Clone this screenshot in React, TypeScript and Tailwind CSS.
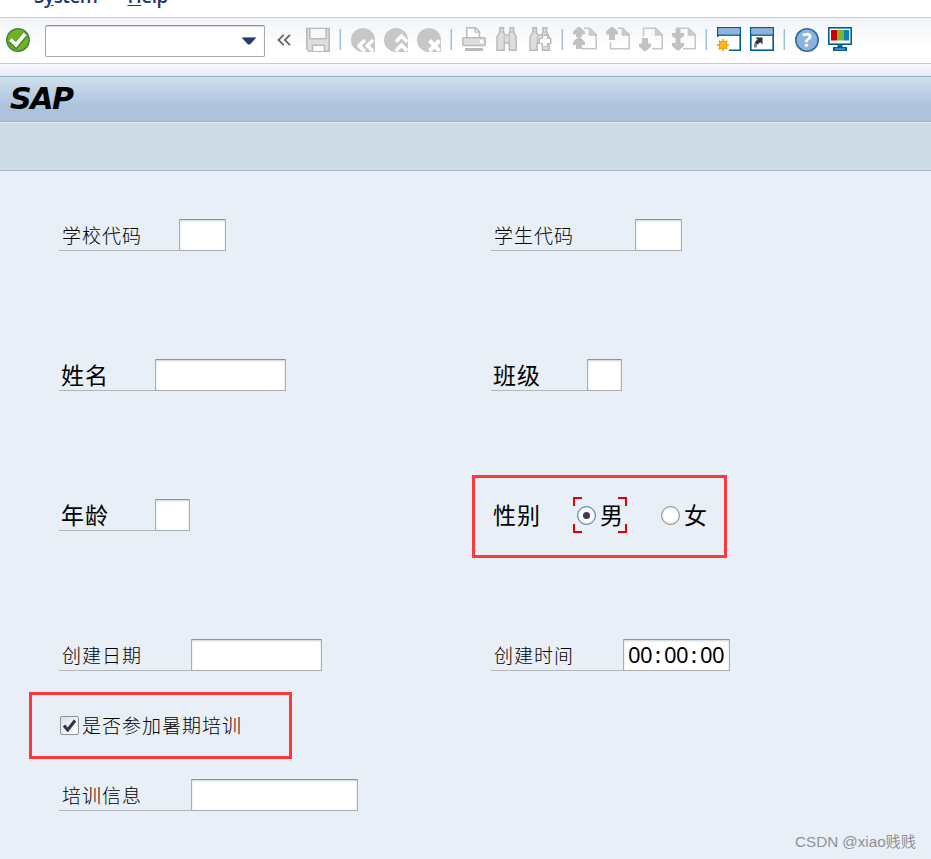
import clsx from "clsx";
import type { ReactNode } from "react";

const GREY = "#bababa";
const LIGHT = "#dedede";
const BLUE = "#005f92";
const SKY = "#8fb3dc";

function Icon({ children, label }: { children: ReactNode; label: string }) {
  return (
    <svg
      width="24"
      height="25"
      viewBox="0 0 24 25"
      className="shrink-0"
      fill="none"
      aria-label={label}
    >
      {children}
    </svg>
  );
}

function Separator() {
  return (
    <div className="flex h-[21px] w-[3px] shrink-0">
      <div className="w-px bg-[#cfe3f3]" />
      <div className="w-px bg-[#9dbcdc]" />
    </div>
  );
}

function OkIcon() {
  return (
    <Icon label="Enter">
      <circle cx="12" cy="13" r="11.2" fill="#6fb41c" stroke="#4a7f4f" strokeWidth="1.5" />
      <path d="M4.5 13.5L10 18.5L19 7.5" stroke="#4a8a2c" strokeWidth="6" />
      <path d="M4.5 12.5L10 17.8L19 7" stroke="#fff" strokeWidth="3.8" />
    </Icon>
  );
}

function SaveIcon() {
  return (
    <Icon label="Save">
      <path d="M.8 1.5H23.2V24.2H3L.8 22Z" fill={LIGHT} stroke={GREY} strokeWidth="1.6" />
      <path d="M3.8 2V11.8H20.2V2" fill="#f7f7f7" stroke={GREY} strokeWidth="1.5" />
      <path d="M6.5 24V18.2H18.5V24" fill="#fff" stroke={GREY} strokeWidth="1.5" />
    </Icon>
  );
}

function RoundIcon({ children, label }: { children: ReactNode; label: string }) {
  return (
    <Icon label={label}>
      <path d="M12 1A12 12 0 1 0 12 25H24V13A12 12 0 0 0 12 1Z" fill="#c7c7c7" />
      {children}
    </Icon>
  );
}

function PrintIcon() {
  return (
    <Icon label="Print">
      <path d="M4.8 10V.8H13.5L17.5 4.8V10" fill="#fff" stroke={GREY} strokeWidth="1.5" />
      <path d="M13 1V5.2H17.5" stroke={GREY} strokeWidth="1.3" />
      <rect x=".8" y="10.7" width="22.4" height="7.8" rx="1" fill={LIGHT} stroke={GREY} strokeWidth="1.5" />
      <rect x="18" y="13" width="3" height="3" fill="#fff" />
      <rect x="3" y="21" width="18" height="3" fill={GREY} />
    </Icon>
  );
}

function FindIcon({ next = false }: { next?: boolean }) {
  return (
    <Icon label={next ? "Find next" : "Find"}>
      <path
        d="M4.8.8H8.5V5L10 8H13.5L15 5V.8H18.7V5L21.2 10V23.2H14.3V16H9.2V23.2H2V10L4.8 5Z"
        fill={LIGHT}
        stroke={GREY}
        strokeWidth="1.5"
      />
      <path d="M4.8 5H8.5M15 5H18.7" stroke={GREY} />
      <path d="M9.2 9V16M14.3 9V16" stroke={GREY} />
      {next && (
        <>
          <path d="M17 7.5V20M10.5 14H23.5" stroke={GREY} strokeWidth="6" />
          <path d="M17 9V19M12 14H22" stroke="#fff" strokeWidth="3.8" />
        </>
      )}
    </Icon>
  );
}

type PageMove = "first" | "previous" | "next" | "last";

const PAGE_ARROWS: Record<PageMove, string> = {
  first:
    "M5 0H7L12 4.5V7.5H9V10H7L12 15V18H9V22H3V18H0V15L5 10H3V7.5H0V4.5Z",
  previous: "M5 0H7L12 4.5V7.5H9V13H3V7.5H0V4.5Z",
  next: "M5 24H7L12 19.5V16.5H9V11H3V16.5H0V19.5Z",
  last: "M3.5 2H8.5V6H12V9L7.5 12.5H8.5V16H12V19L7 23.5H5L0 19V16H3.5V12.5H4.5L0 9V6H3.5Z",
};

function PageIcon({ move }: { move: PageMove }) {
  return (
    <Icon label={`${move} page`}>
      {move === "previous" && <path d="M4.5 15V21.8H23.2V7.5L16.5 1.2H11.5" stroke="#c6c6c6" strokeWidth="1.5" />}
      {move === "next" && <path d="M4.5 9.5V1.2H16.5L23.2 7.5V21.8H13" stroke="#c6c6c6" strokeWidth="1.5" />}
      {move === "first" && <path d="M11 1.2H16.5L23.2 7.5V21.8H9" stroke="#c6c6c6" strokeWidth="1.5" />}
      {move === "last" && <path d="M4 1.2H16.5L23.2 7.5V21.8H11" stroke="#c6c6c6" strokeWidth="1.5" />}
      <path d="M16.2 1V8.2H23.5Z" fill="#cbcbcb" stroke="#c6c6c6" strokeWidth="1" />
      <path d={PAGE_ARROWS[move]} fill="#c2c2c2" />
    </Icon>
  );
}

const RAYS = [0, 45, 90, 135];

function NewSessionIcon() {
  return (
    <Icon label="New session">
      <path d="M.8 10V.8H23.2V23.2H12" fill="#fff" stroke={BLUE} strokeWidth="1.6" />
      <rect x="1.5" y="1.5" width="21" height="5.8" fill={SKY} />
      <path d="M1 8.1H23" stroke={BLUE} strokeWidth="1.5" />
      {RAYS.map((angle) => (
        <path
          key={angle}
          d="M0 18H12"
          stroke="#f79a00"
          strokeWidth="1.6"
          transform={`rotate(${angle} 6 18)`}
        />
      ))}
      <circle cx="6" cy="18" r="4" fill="#ffb71b" stroke="#f79a00" />
    </Icon>
  );
}

function ShortcutIcon() {
  return (
    <Icon label="Create shortcut">
      <rect x=".8" y=".8" width="22.4" height="22.4" fill="#fff" stroke={BLUE} strokeWidth="1.6" />
      <rect x="1.5" y="1.5" width="21" height="5.8" fill={SKY} />
      <path d="M1 8.1H23" stroke={BLUE} strokeWidth="1.5" />
      <path d="M5.5 20.5C5 17 6.5 14 9.5 13.5" stroke="#888" strokeWidth="3" />
      <path d="M5.5 10.5H12.5V17.5L10.3 15.3L7.5 17.5L5 15.5L7.6 12.6Z" fill="#333" />
    </Icon>
  );
}

function HelpIcon() {
  return (
    <Icon label="Help">
      <circle cx="12" cy="13" r="11.2" fill={SKY} stroke="#2b6c9f" strokeWidth="1.6" />
      <text x="12" y="20" textAnchor="middle" fill="#fff" className="font-['Open_Sans',sans-serif] text-[20px] font-bold">
        ?
      </text>
    </Icon>
  );
}

function LayoutIcon() {
  return (
    <Icon label="Customize local layout">
      <rect x=".8" y=".8" width="22.4" height="16.4" fill="#fff" stroke={BLUE} strokeWidth="1.6" />
      <rect x="3" y="3" width="6.5" height="10.5" fill="#cc0000" />
      <rect x="9.5" y="3" width="6" height="10.5" fill="#76b82a" />
      <rect x="15.5" y="3" width="5.7" height="10.5" fill="#0a7fc4" />
      <path d="M9.5 17H14.5V20H19V24H5V20H9.5Z" fill={BLUE} />
      <path d="M7 22H17" stroke={SKY} strokeWidth="1" />
    </Icon>
  );
}

function Toolbar() {
  return (
    <div className="h-[47px] border-y border-[#c6cddc] bg-linear-to-b from-[#f1f4f9] to-white to-70%">
      <div className="flex h-[43px] items-center gap-[9px] pl-[6px]">
        <OkIcon />
        <div className="ml-[6px] mt-[3px] flex h-8 w-[220px] shrink-0 items-center justify-end rounded-[2px] border border-[#a5a9ae] border-t-[#8d9298] bg-white pr-[8px] shadow-[inset_0_1px_1px_#d5d8dc]">
          <svg width="14" height="8" viewBox="0 0 14 8">
            <path d="M.5 0H13.5V1.5L8 7.5H6L.5 1.5Z" fill="#243b70" />
            <path d="M.5 0H13.5" stroke="#7d8cae" strokeWidth="2" />
          </svg>
        </div>
        <svg width="14" height="12" viewBox="0 0 14 12" fill="none" className="ml-[3px] mr-[6px] shrink-0">
          <path d="M6.7 .8L1.5 6L6.7 11.2M13 .8L7.8 6L13 11.2" stroke="#666" strokeWidth="1.8" />
        </svg>
        <SaveIcon />
        <Separator />
        <RoundIcon label="Back">
          <path d="M13.8 13L8.3 18.7L13.8 24.4M22 13L16.5 18.7L22 24.4" stroke="#fff" strokeWidth="3.6" />
        </RoundIcon>
        <RoundIcon label="Exit">
          <path d="M11.8 14.8L17.5 9.1L23.2 14.8M11.8 23.8L17.5 18.1L23.2 23.8" stroke="#fff" strokeWidth="3.6" />
        </RoundIcon>
        <RoundIcon label="Cancel">
          <path d="M12.5 13.5L22.5 23.8M22.5 13.5L12.5 23.8" stroke="#fff" strokeWidth="4" />
        </RoundIcon>
        <Separator />
        <PrintIcon />
        <FindIcon />
        <FindIcon next />
        <Separator />
        <PageIcon move="first" />
        <PageIcon move="previous" />
        <PageIcon move="next" />
        <PageIcon move="last" />
        <Separator />
        <NewSessionIcon />
        <ShortcutIcon />
        <Separator />
        <HelpIcon />
        <LayoutIcon />
      </div>
    </div>
  );
}

interface FieldProps {
  label: string;
  labelWidth: string;
  inputWidth: string;
  large?: boolean;
  children?: ReactNode;
}

function Field({ label, labelWidth, inputWidth, large, children }: FieldProps) {
  return (
    <div className="flex h-8">
      <div
        className={clsx(
          "flex items-center border-b border-[#b3b6b9] pb-px whitespace-nowrap tracking-[1px]",
          large ? "pl-[2px] text-[23px]" : "pl-[3px] text-[19px] font-light",
          labelWidth,
        )}
      >
        {label}
      </div>
      <div
        className={clsx(
          "flex items-center rounded-[1px] border border-[#a9acb0] border-t-[#8f9398] bg-white shadow-[inset_0_1px_2px_#cfd2d6]",
          inputWidth,
        )}
      >
        {children}
      </div>
    </div>
  );
}

function Corner({ className }: { className: string }) {
  return <span className={clsx("absolute size-[9px] border-[#e00000]", className)} />;
}

function Radio({ checked = false }: { checked?: boolean }) {
  return (
    <span
      className={clsx(
        "flex size-[19px] items-center justify-center rounded-full border-[1.5px] bg-white",
        checked ? "border-[#4a7db8] shadow-[inset_0_0_2px_#7fa5cf]" : "border-[#8a8a8a] shadow-[inset_0_0_2px_#bbb]",
      )}
    >
      {checked && <span className="size-[7px] rounded-full bg-[#3b3b58]" />}
    </span>
  );
}

function GenderGroup() {
  return (
    <div className="-ml-[19px] -mt-6 flex h-[83px] w-[255px] items-center border-3 border-[#fd3838] pb-[3px] pl-[18px] text-[23px]">
      <span className="w-20 pb-[2px] tracking-[1px]">性别</span>
      <span className="relative flex h-9 w-[54px] items-center gap-[4px] pl-[4px]">
        <Corner className="left-0 top-0 border-l-2 border-t-2" />
        <Corner className="right-0 top-0 border-r-2 border-t-2" />
        <Corner className="bottom-0 left-0 border-b-2 border-l-2" />
        <Corner className="bottom-0 right-0 border-b-2 border-r-2" />
        <Radio checked />
        <span className="pb-[2px]">男</span>
      </span>
      <span className="ml-[34px] flex items-center gap-[4px]">
        <Radio />
        <span className="pb-[2px]">女</span>
      </span>
    </div>
  );
}

function TrainingCheckbox() {
  return (
    <div className="-ml-[30px] mt-[21px] flex h-[67px] w-[263px] items-center border-3 border-[#fd3838] pl-[28px]">
      <span className="flex size-[19px] items-center justify-center rounded-[2px] border border-[#8f9296] bg-linear-to-br from-[#dfe1e4] to-white">
        <svg width="13" height="13" viewBox="0 0 13 13" fill="none">
          <path d="M1 6.5L4.7 11L12 1.5" stroke="#33334f" strokeWidth="3" />
        </svg>
      </span>
      <span className="pb-[2px] pl-[3px] text-[19px] font-light tracking-[1px]">是否参加暑期培训</span>
    </div>
  );
}

export default function App() {
  return (
    <div className="relative flex h-[859px] w-[931px] flex-col overflow-hidden bg-[#e8eff6] font-['Noto_Sans_CJK_SC',sans-serif] leading-none text-black">
      <div className="h-[17px] shrink-0 overflow-hidden bg-white">
        <div className="-mt-[16px] flex gap-[30px] pl-[34px] font-['Open_Sans',sans-serif] text-[19px] font-semibold leading-6 tracking-[-0.5px] text-[#20356b]">
          <span>
            S<span className="underline underline-offset-2">y</span>stem
          </span>
          <span>
            <span className="underline underline-offset-2">H</span>elp
          </span>
        </div>
      </div>
      <Toolbar />
      <div className="h-3 shrink-0 bg-linear-to-b from-[#f7f9fc] to-[#e8edf5]" />
      <div className="flex h-[46px] shrink-0 items-center border-y border-t-[#93adc3] border-b-[#9fb2c4] bg-linear-to-b from-[#d0e0ec] to-[#acc3db] to-65% pl-[10px] pb-px">
        <h1 className="font-['DejaVu_Sans',sans-serif] text-[30px] font-bold italic tracking-[-1.4px]">SAP</h1>
      </div>
      <div className="h-[49px] shrink-0 border-b border-t border-b-[#a5b4c1] border-t-[#e6eff6] bg-[#cedce7]" />
      <main className="grid grid-cols-[432px_1fr] grid-rows-[140px_140px_140px_140px] pl-[59px] pt-[48px]">
        <Field label="学校代码" labelWidth="w-[120px]" inputWidth="w-[47px]" />
        <Field label="学生代码" labelWidth="w-[144px]" inputWidth="w-[47px]" />
        <Field large label="姓名" labelWidth="w-[96px]" inputWidth="w-[131px]" />
        <Field large label="班级" labelWidth="w-[96px]" inputWidth="w-[35px]" />
        <Field large label="年龄" labelWidth="w-[96px]" inputWidth="w-[35px]" />
        <GenderGroup />
        <div>
          <Field label="创建日期" labelWidth="w-[132px]" inputWidth="w-[131px]" />
          <TrainingCheckbox />
        </div>
        <Field label="创建时间" labelWidth="w-[132px]" inputWidth="w-[107px]">
          <span className="flex pb-[2px] pl-[4px] font-['Noto_Sans',sans-serif] text-[22px]">
            <span className="w-6 tracking-[-0.6px]">00</span>
            <span className="w-3 text-center">:</span>
            <span className="w-6 tracking-[-0.6px]">00</span>
            <span className="w-3 text-center">:</span>
            <span className="w-6 tracking-[-0.6px]">00</span>
          </span>
        </Field>
        <Field label="培训信息" labelWidth="w-[132px]" inputWidth="w-[167px]" />
      </main>
      <div className="absolute bottom-[10px] right-[15px] font-['Liberation_Sans','Noto_Sans_CJK_SC',sans-serif] text-[15.2px] text-[#8e9297]">
        CSDN @xiao贱贱
      </div>
    </div>
  );
}
